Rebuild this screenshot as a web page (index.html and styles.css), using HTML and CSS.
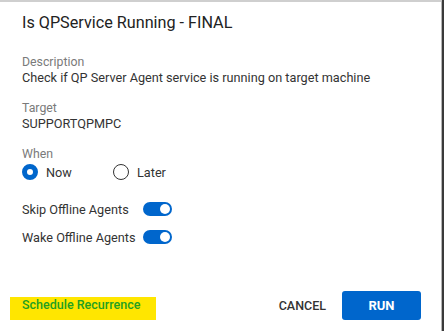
FILE: index.html
```html
<!DOCTYPE html>
<html>
<head>
<meta charset="utf-8">
<link rel="stylesheet" href="styles.css">
</head>
<body>
<div class="dialog">
  <h1 class="title">Is QPService Running - FINAL</h1>
  <div class="content">
    <div class="field">
      <div class="label">Description</div>
      <div class="value">Check if QP Server Agent service is running on target machine</div>
    </div>
    <div class="field">
      <div class="label">Target</div>
      <div class="value">SUPPORTQPMPC</div>
    </div>
    <div class="field">
      <div class="label">When</div>
      <div class="radios">
        <label class="radio"><span class="dot checked"></span><span>Now</span></label>
        <label class="radio"><span class="dot"></span><span>Later</span></label>
      </div>
    </div>
    <div class="switches">
      <span class="switch-label">Skip Offline Agents</span>
      <span class="toggle"><span class="knob"></span></span>
      <span class="switch-label">Wake Offline Agents</span>
      <span class="toggle"><span class="knob"></span></span>
    </div>
  </div>
  <div class="footer">
    <span class="recurrence">Schedule Recurrence</span>
    <span class="spacer"></span>
    <span class="cancel">CANCEL</span>
    <span class="run">RUN</span>
  </div>
</div>
</body>
</html>
```
FILE: styles.css
```css
html, body {
  margin: 0;
  padding: 0;
  height: 100%;
  background: #3a3a3a;
}
body {
  font-family: Roboto, "Noto Sans", sans-serif;
  color: #333;
}
.dialog {
  box-sizing: border-box;
  width: 442px;
  height: 331px;
  background: #fff;
  border-top: 2px solid #cfcfcf;
  border-right: 1px solid #b5b5b5;
  display: flex;
  flex-direction: column;
}
.title {
  margin: 0;
  padding: 11px 22px 0;
  font-size: 16.2px;
  line-height: 20px;
  font-weight: 400;
  color: #222;
}
.content {
  padding: 21px 22px 0;
  display: flex;
  flex-direction: column;
}
.field {
  margin-bottom: 14px;
}
.field:nth-child(3) {
  margin-bottom: 0;
}
.label {
  font-size: 12.3px;
  line-height: 16px;
  color: #7a7a7a;
}
.value {
  font-size: 12.7px;
  line-height: 16px;
  color: #333;
}
.radios {
  display: flex;
  height: 18px;
  align-items: center;
  margin-top: 1px;
}
.radio {
  display: flex;
  align-items: center;
  gap: 8px;
  font-size: 12.7px;
  color: #333;
  width: 91px;
}
.dot {
  box-sizing: border-box;
  width: 16px;
  height: 16px;
  border-radius: 50%;
  border: 1.5px solid #333;
}
.dot.checked {
  border: 5px solid #0066cc;
}
.switches {
  margin-top: 18px;
  display: grid;
  grid-template-columns: 121px 28px;
  grid-auto-rows: 20px;
  row-gap: 8px;
  align-items: center;
}
.switch-label {
  font-size: 12.7px;
  color: #333;
}
.toggle {
  box-sizing: border-box;
  width: 29px;
  height: 14px;
  border-radius: 7px;
  background: #0066cc;
  display: flex;
  justify-content: flex-end;
  align-items: center;
  padding-right: 2px;
}
.knob {
  width: 10px;
  height: 10px;
  border-radius: 50%;
  background: #fff;
}
.footer {
  margin-top: auto;
  display: flex;
  align-items: center;
  padding: 0 20px 11px 10px;
}
.recurrence {
  align-self: flex-start;
  margin-top: 7px;
  background: #ffe600;
  color: #22a022;
  font-size: 12.5px;
  font-weight: 500;
  line-height: 16px;
  padding: 0 16px 7px 12px;
}
.spacer {
  flex: 1;
}
.cancel {
  font-size: 12.5px;
  font-weight: 500;
  color: #333;
  margin-right: 16px;
}
.run {
  width: 79px;
  height: 29px;
  border-radius: 3px;
  background: #0066cc;
  color: #fff;
  font-size: 13px;
  font-weight: 700;
  display: flex;
  align-items: center;
  justify-content: center;
}
```
